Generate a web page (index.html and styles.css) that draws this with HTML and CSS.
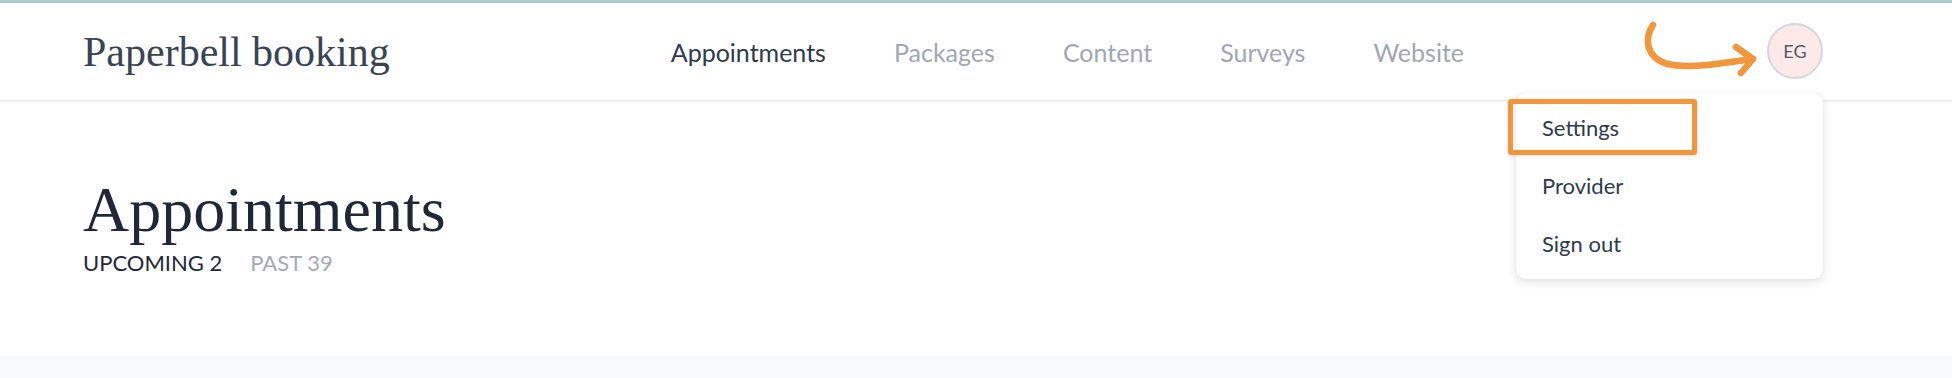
FILE: index.html
```html
<!DOCTYPE html>
<html lang="en">
<head>
<meta charset="utf-8">
<title>Paperbell booking</title>
<link rel="stylesheet" href="styles.css">
</head>
<body>
<div class="topline"></div>
<header class="header">
  <div class="logo">Paperbell booking</div>
  <nav class="nav">
    <a class="nav-item active">Appointments</a>
    <a class="nav-item">Packages</a>
    <a class="nav-item">Content</a>
    <a class="nav-item">Surveys</a>
    <a class="nav-item">Website</a>
  </nav>
  <div class="avatar">EG</div>
  <svg class="arrow" width="130" height="70" viewBox="0 0 130 70" xmlns="http://www.w3.org/2000/svg">
    <path d="M13 4 C 4 18, 6 36, 27 43 C 50 48, 85 42, 112 38" fill="none" stroke="#f3953a" stroke-width="6.5" stroke-linecap="round" stroke-linejoin="round"/>
    <path d="M96 26 L113 38 L101 52" fill="none" stroke="#f3953a" stroke-width="6.5" stroke-linecap="round" stroke-linejoin="round"/>
  </svg>
  <div class="dropdown">
    <div class="dd-item">Settings</div>
    <div class="dd-item">Provider</div>
    <div class="dd-item">Sign out</div>
    <div class="highlight"></div>
  </div>
</header>
<main class="main">
  <h1 class="title">Appointments</h1>
  <div class="tabs">
    <span class="tab active">UPCOMING 2</span>
    <span class="tab">PAST 39</span>
  </div>
</main>
<div class="band"></div>
</body>
</html>
```

FILE: styles.css
```css
* { box-sizing: border-box; }
html, body { margin: 0; padding: 0; }
body {
  background: #ffffff;
  font-family: Lato, "Liberation Sans", sans-serif;
  color: #1f2937;
}
.topline {
  height: 3px;
  background: #a9cbcf;
}
.header {
  position: relative;
  display: flex;
  align-items: center;
  height: 98px;
  padding: 0 129px 0 83px;
  border-bottom: 1px solid #e6e7ea;
  box-shadow: 0 1px 3px rgba(0,0,0,0.05);
  background: #fff;
  z-index: 2;
}
.logo {
  font-family: "Liberation Serif", "Times New Roman", serif;
  font-size: 42px;
  color: #3a4356;
  letter-spacing: 0;
}
.nav {
  display: flex;
  gap: 68px;
  margin-left: auto;
}
.nav-item {
  font-size: 25px;
  color: #a0a7b4;
  text-decoration: none;
}
.nav-item.active { color: #2f3a4c; }
.avatar {
  margin-left: 303px;
  width: 56px;
  height: 56px;
  border-radius: 50%;
  border: 2px solid #d3d7de;
  background: #fce9e8;
  color: #55596a;
  font-size: 18px;
  display: flex;
  align-items: center;
  justify-content: center;
  margin-top: -2px;
}
.arrow {
  position: absolute;
  left: 1640px;
  top: 18px;
}
.dropdown {
  position: absolute;
  right: 129px;
  top: 90px;
  width: 307px;
  padding: 6px 0;
  background: #fff;
  border-radius: 9px;
  box-shadow: 0 3px 10px rgba(0,0,0,0.12), 0 0 1px rgba(0,0,0,0.12);
}
.dd-item {
  height: 58px;
  line-height: 58px;
  padding-left: 26px;
  font-size: 22px;
  color: #2f3a4c;
}
.highlight {
  position: absolute;
  left: -8px;
  top: 6px;
  width: 189px;
  height: 56px;
  border: 5px solid #f3953a;
  border-radius: 3px;
  box-shadow: 0 1px 4px rgba(0,0,0,0.12);
}
.main {
  padding: 77px 83px 81px;
}
.title {
  margin: 0;
  font-family: "Liberation Serif", "Times New Roman", serif;
  font-weight: normal;
  font-size: 64px;
  line-height: 64px;
  color: #1f2838;
}
.tabs {
  display: flex;
  gap: 28px;
  margin-top: 9px;
  line-height: 24px;
}
.tab {
  font-size: 22px;
  color: #a3a9b6;
}
.tab.active { color: #1f2838; }
.band {
  height: 22px;
  background: #f9fafb;
}
```
